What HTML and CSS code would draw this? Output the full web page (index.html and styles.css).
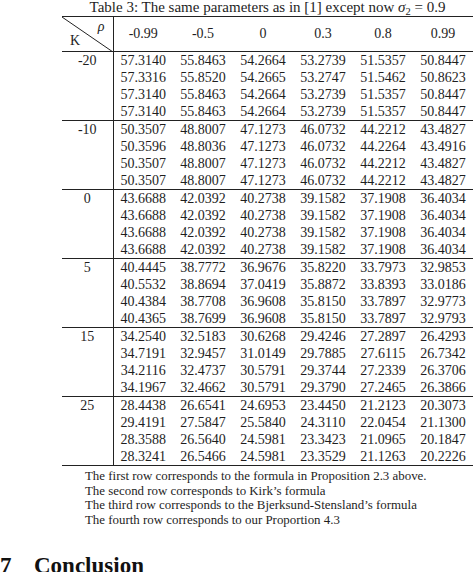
FILE: index.html
```html
<!DOCTYPE html>
<html>
<head>
<meta charset="utf-8">
<link rel="stylesheet" href="styles.css">
</head>
<body>
<div class="page">
  <div class="table-block">
    <div class="caption">Table 3: The same parameters as in [1] except now <i>σ</i><sub>2</sub> = 0.9</div>
    <table class="results">
      <colgroup><col class="kcol"><col><col><col><col><col><col></colgroup>
      <thead>
        <tr>
          <th class="corner">
            <svg class="diag" width="51" height="35" viewBox="0 0 51 35"><line x1="0" y1="0" x2="51" y2="35" stroke="#222" stroke-width="1"/></svg>
            <span class="rho">ρ</span>
            <span class="klabel">K</span>
          </th>
          <th>-0.99</th><th>-0.5</th><th>0</th><th>0.3</th><th>0.8</th><th>0.99</th>
        </tr>
      </thead>
      <tbody>
        <tr><td class="k">-20</td><td>57.3140</td><td>55.8463</td><td>54.2664</td><td>53.2739</td><td>51.5357</td><td>50.8447</td></tr>
        <tr><td class="k"></td><td>57.3316</td><td>55.8520</td><td>54.2665</td><td>53.2747</td><td>51.5462</td><td>50.8623</td></tr>
        <tr><td class="k"></td><td>57.3140</td><td>55.8463</td><td>54.2664</td><td>53.2739</td><td>51.5357</td><td>50.8447</td></tr>
        <tr><td class="k"></td><td>57.3140</td><td>55.8463</td><td>54.2664</td><td>53.2739</td><td>51.5357</td><td>50.8447</td></tr>
      </tbody>
      <tbody>
        <tr><td class="k">-10</td><td>50.3507</td><td>48.8007</td><td>47.1273</td><td>46.0732</td><td>44.2212</td><td>43.4827</td></tr>
        <tr><td class="k"></td><td>50.3596</td><td>48.8036</td><td>47.1273</td><td>46.0732</td><td>44.2264</td><td>43.4916</td></tr>
        <tr><td class="k"></td><td>50.3507</td><td>48.8007</td><td>47.1273</td><td>46.0732</td><td>44.2212</td><td>43.4827</td></tr>
        <tr><td class="k"></td><td>50.3507</td><td>48.8007</td><td>47.1273</td><td>46.0732</td><td>44.2212</td><td>43.4827</td></tr>
      </tbody>
      <tbody>
        <tr><td class="k">0</td><td>43.6688</td><td>42.0392</td><td>40.2738</td><td>39.1582</td><td>37.1908</td><td>36.4034</td></tr>
        <tr><td class="k"></td><td>43.6688</td><td>42.0392</td><td>40.2738</td><td>39.1582</td><td>37.1908</td><td>36.4034</td></tr>
        <tr><td class="k"></td><td>43.6688</td><td>42.0392</td><td>40.2738</td><td>39.1582</td><td>37.1908</td><td>36.4034</td></tr>
        <tr><td class="k"></td><td>43.6688</td><td>42.0392</td><td>40.2738</td><td>39.1582</td><td>37.1908</td><td>36.4034</td></tr>
      </tbody>
      <tbody>
        <tr><td class="k">5</td><td>40.4445</td><td>38.7772</td><td>36.9676</td><td>35.8220</td><td>33.7973</td><td>32.9853</td></tr>
        <tr><td class="k"></td><td>40.5532</td><td>38.8694</td><td>37.0419</td><td>35.8872</td><td>33.8393</td><td>33.0186</td></tr>
        <tr><td class="k"></td><td>40.4384</td><td>38.7708</td><td>36.9608</td><td>35.8150</td><td>33.7897</td><td>32.9773</td></tr>
        <tr><td class="k"></td><td>40.4365</td><td>38.7699</td><td>36.9608</td><td>35.8150</td><td>33.7897</td><td>32.9793</td></tr>
      </tbody>
      <tbody>
        <tr><td class="k">15</td><td>34.2540</td><td>32.5183</td><td>30.6268</td><td>29.4246</td><td>27.2897</td><td>26.4293</td></tr>
        <tr><td class="k"></td><td>34.7191</td><td>32.9457</td><td>31.0149</td><td>29.7885</td><td>27.6115</td><td>26.7342</td></tr>
        <tr><td class="k"></td><td>34.2116</td><td>32.4737</td><td>30.5791</td><td>29.3744</td><td>27.2339</td><td>26.3706</td></tr>
        <tr><td class="k"></td><td>34.1967</td><td>32.4662</td><td>30.5791</td><td>29.3790</td><td>27.2465</td><td>26.3866</td></tr>
      </tbody>
      <tbody>
        <tr><td class="k">25</td><td>28.4438</td><td>26.6541</td><td>24.6953</td><td>23.4450</td><td>21.2123</td><td>20.3073</td></tr>
        <tr><td class="k"></td><td>29.4191</td><td>27.5847</td><td>25.5840</td><td>24.3110</td><td>22.0454</td><td>21.1300</td></tr>
        <tr><td class="k"></td><td>28.3588</td><td>26.5640</td><td>24.5981</td><td>23.3423</td><td>21.0965</td><td>20.1847</td></tr>
        <tr><td class="k"></td><td>28.3241</td><td>26.5466</td><td>24.5981</td><td>23.3529</td><td>21.1263</td><td>20.2226</td></tr>
      </tbody>
    </table>
  </div>
  <div class="notes">
    <p>The first row corresponds to the formula in Proposition 2.3 above.</p>
    <p>The second row corresponds to Kirk’s formula</p>
    <p>The third row corresponds to the Bjerksund-Stensland’s formula</p>
    <p>The fourth row corresponds to our Proportion 4.3</p>
  </div>
  <h2 class="section"><span class="secnum">7</span><span class="sectitle">Conclusion</span></h2>
</div>
</body>
</html>
```

FILE: styles.css
```css
html, body {
  margin: 0;
  padding: 0;
  background: #ffffff;
}
body {
  font-family: "Liberation Serif", "DejaVu Serif", serif;
  color: #1e1e1e;
  width: 474px;
  height: 572px;
  overflow: hidden;
}
.page {
  display: flex;
  flex-direction: column;
}
.table-block {
  margin-left: 62px;
  width: 411px;
  display: flex;
  flex-direction: column;
}
.caption {
  height: 16px;
  line-height: 15px;
  font-size: 15px;
  text-align: center;
  white-space: nowrap;
}
.caption i {
  font-style: italic;
}
.caption sub {
  font-size: 10.5px;
  line-height: 0;
  vertical-align: -3px;
}
.results {
  border-collapse: collapse;
  table-layout: fixed;
  width: 411px;
  font-size: 14px;
  border-top: 1px solid #222;
}
.results col.kcol {
  width: 51px;
}
.results th, .results td {
  padding: 0;
  text-align: center;
  font-weight: normal;
  white-space: nowrap;
}
.results thead th {
  height: 34px;
  border-bottom: 1px solid #222;
  vertical-align: middle;
}
.results tbody {
  border-bottom: 1px solid #222;
}
.results td {
  height: 17px;
  line-height: 17px;
}
.results .k, .results .corner {
  border-right: 1px solid #222;
}
.corner {
  position: relative;
}
.diag {
  position: absolute;
  left: 0;
  top: 0;
  display: block;
}
.rho {
  position: absolute;
  right: 8px;
  top: 3px;
  font-style: italic;
  font-size: 14px;
  line-height: 14px;
}
.klabel {
  position: absolute;
  left: 8px;
  bottom: 2px;
  font-size: 14px;
  line-height: 16px;
}
.notes {
  margin-left: 85px;
  margin-top: 3px;
  font-size: 12.9px;
  line-height: 14.5px;
}
.notes p {
  margin: 0;
  white-space: nowrap;
}
.section {
  margin: 26px 0 0 0;
  font-size: 23px;
  line-height: 26px;
  font-weight: bold;
  display: flex;
  color: #111;
}
.secnum {
  width: 34px;
}
```
